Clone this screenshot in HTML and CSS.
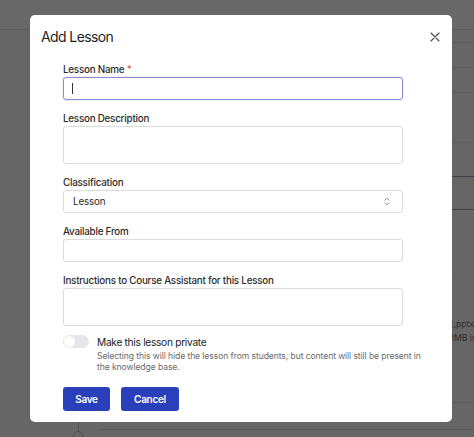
FILE: index.html
```html
<!DOCTYPE html>
<html lang="en">
<head>
<meta charset="utf-8">
<title>Add Lesson</title>
<link rel="stylesheet" href="styles.css">
</head>
<body>
<div class="page">
  <header class="topbar"></header>
  <main class="content">
    <div class="row r1"></div>
    <div class="row r2"></div>
    <div class="row r3"></div>
    <div class="row r4"></div>
    <div class="row r5 selected"></div>
    <div class="row r6"></div>
    <div class="row r7"></div>
    <div class="upload-note">
      <p class="note-line"><span class="note-pre n1">Accepted files: pdf, docx,</span>pptx</p>
      <p class="note-line"><span class="note-pre n2">Maximum upload size is 50</span>MB in</p>
    </div>
    <div class="row r8"></div>
    <div class="timeline">
      <div class="tl-track">
        <span class="tl-line"></span>
        <span class="tl-dot"></span>
      </div>
      <span class="tl-rule"></span>
    </div>
  </main>
</div>

<div class="overlay">
  <div class="modal" role="dialog" aria-labelledby="modal-title">
    <div class="modal-header">
      <h2 id="modal-title" class="modal-title">Add Lesson</h2>
      <button class="close-btn" aria-label="Close">
        <svg width="10" height="10" viewBox="0 0 10 10"><path d="M1 1L9 9M9 1L1 9" stroke="#4a4a4a" stroke-width="1.1" fill="none" stroke-linecap="round"/></svg>
      </button>
    </div>
    <form class="modal-form">
      <div class="field">
        <label class="label">Lesson Name <span class="req">*</span></label>
        <div class="input focused"><span class="caret"></span></div>
      </div>
      <div class="field">
        <label class="label">Lesson Description</label>
        <div class="input textarea"></div>
      </div>
      <div class="field">
        <label class="label">Classification</label>
        <div class="input select">
          <span class="select-value">Lesson</span>
          <svg class="chev" width="6" height="9" viewBox="0 0 6 9"><path d="M1 3.2L3 1.2L5 3.2M1 5.8L3 7.8L5 5.8" stroke="#777" stroke-width="0.9" fill="none" stroke-linecap="round" stroke-linejoin="round"/></svg>
        </div>
      </div>
      <div class="field">
        <label class="label">Available From</label>
        <div class="input"></div>
      </div>
      <div class="field">
        <label class="label">Instructions to Course Assistant for this Lesson</label>
        <div class="input textarea"></div>
      </div>
      <div class="toggle-row">
        <span class="toggle"><span class="knob"></span></span>
        <div class="toggle-text">
          <div class="toggle-title">Make this lesson private</div>
          <div class="toggle-desc">Selecting this will hide the lesson from students, but content will still be present in the knowledge base.</div>
        </div>
      </div>
      <div class="actions">
        <button type="button" class="btn save">Save</button>
        <button type="button" class="btn cancel">Cancel</button>
      </div>
    </form>
  </div>
</div>
</body>
</html>
```
FILE: styles.css
```css
html, body {
  margin: 0;
  padding: 0;
}
body {
  width: 474px;
  height: 437px;
  overflow: hidden;
  background: #666666;
  font-family: Inter, "Noto Sans", "Liberation Sans", sans-serif;
}
.page {
  height: 437px;
  display: flex;
  flex-direction: column;
}
.topbar {
  height: 29px;
  background: #686868;
  border-bottom: 1px solid #5c5c5c;
  flex: none;
}
.content {
  margin-left: 60px;
  display: flex;
  flex-direction: column;
}
.row {
  border-bottom: 1px solid #5d5d5d;
  flex: none;
}
.r1 { height: 12px; }
.r2 { height: 24px; }
.r3 { height: 24px; }
.r4 { height: 49px; }
.r5 { height: 33px; border-bottom-color: #3d3f55; }
.r6 { height: 32px; border-bottom-color: #404256; }
.r7 { height: 66px; border-bottom-color: #626262; }
.upload-note {
  padding-top: 40px;
  flex: none;
}
.note-line {
  margin: 0;
  white-space: nowrap;
  font-size: 8.6px;
  line-height: 14px;
  color: #2f2f2f;
}
.note-pre {
  display: inline-block;
  text-align: right;
}
.n1 { width: 396px; }
.n2 { width: 394px; }
.r8 { height: 57px; }
.timeline {
  display: flex;
  align-items: flex-start;
  flex: none;
}
.tl-track {
  margin-left: 13px;
  width: 10px;
  display: flex;
  flex-direction: column;
  align-items: center;
}
.tl-line {
  width: 1px;
  height: 28px;
  background: #515151;
}
.tl-dot {
  width: 8px;
  height: 8px;
  border: 1px solid #515151;
  border-radius: 50%;
}
.tl-rule {
  margin-top: 26px;
  margin-left: 17px;
  flex: 1;
  width: 400px;
  height: 1px;
  background: #5a5a5a;
}

.overlay {
  position: absolute;
  inset: 0;
}
.modal {
  position: absolute;
  left: 30px;
  top: 15px;
  width: 422px;
  height: 407px;
  box-sizing: border-box;
  background: #ffffff;
  border-radius: 5px;
  padding: 12px 0 11px 0;
}
.modal-header {
  display: flex;
  justify-content: space-between;
  align-items: center;
  padding: 0 12px 0 11px;
}
.modal-title {
  margin: 0;
  font-size: 14px;
  line-height: 20px;
  font-weight: 400;
  letter-spacing: -0.6px;
  color: #1f1f1f;
}
.close-btn {
  border: 0;
  background: none;
  padding: 0;
  width: 10px;
  height: 10px;
  display: flex;
}
.modal-form {
  margin: 14px 49px 0 33px;
}
.field {
  margin-bottom: 10px;
}
.label {
  display: block;
  font-size: 9.8px;
  line-height: 13px;
  padding-top: 1.5px;
  font-weight: 500;
  letter-spacing: -0.22px;
  color: #2b2b2b;
  margin-bottom: 1.5px;
}
.req {
  color: #d9534f;
}
.input {
  box-sizing: border-box;
  height: 23px;
  border: 1px solid #dcdcdc;
  border-radius: 3px;
  background: #fff;
  display: flex;
  align-items: center;
}
.input.focused {
  border-color: #8d8ad8;
  box-shadow: 0 0 0 1px #f1f0fb;
}
.caret {
  display: block;
  width: 1px;
  height: 11px;
  background: #333;
  margin-left: 8px;
}
.input.textarea {
  height: 38px;
}
.input.select {
  justify-content: space-between;
  padding: 0 12px 0 9px;
}
.select-value {
  font-size: 9.8px;
  letter-spacing: -0.15px;
  color: #2b2b2b;
}
.toggle-row {
  display: flex;
  gap: 8px;
  margin-top: -1px;
}
.toggle {
  flex: none;
  width: 26px;
  height: 13px;
  border-radius: 7px;
  background: #e4e6ea;
  display: flex;
  align-items: center;
  padding: 0 1px;
  box-sizing: border-box;
}
.knob {
  width: 11px;
  height: 11px;
  border-radius: 50%;
  background: #fff;
}
.toggle-title {
  font-size: 10.2px;
  line-height: 14px;
  letter-spacing: -0.3px;
  color: #222;
}
.toggle-desc {
  margin-top: 1.5px;
  font-size: 8.6px;
  line-height: 11px;
  letter-spacing: -0.09px;
  color: #6a6a6a;
  width: 330px;
}
.actions {
  display: flex;
  gap: 11px;
  margin-top: 14.5px;
}
.btn {
  height: 24px;
  border: 0;
  border-radius: 3px;
  background: #2a3fba;
  color: #fff;
  font-family: inherit;
  font-size: 10px;
  font-weight: 600;
  letter-spacing: -0.3px;
  padding: 0;
}
.btn.save { width: 47px; }
.btn.cancel { width: 58px; }
```
